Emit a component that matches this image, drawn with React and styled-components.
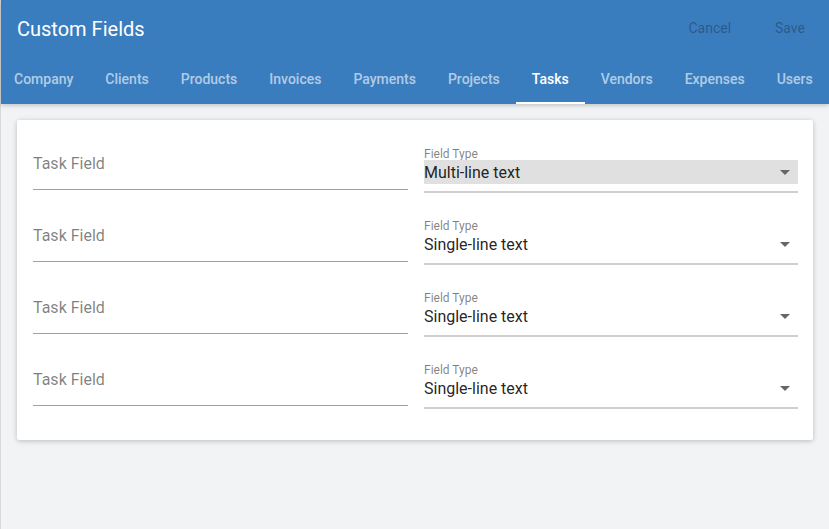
import React from "react";
import styled, { createGlobalStyle } from "styled-components";

const Global = createGlobalStyle`
  html, body { margin: 0; padding: 0; height: 100%; }
  body { background: #f2f3f5; font-family: Roboto, "Noto Sans", sans-serif; }
  #root { min-height: 100%; }
`;

const Page = styled.div`
  min-height: 529px;
  box-sizing: border-box;
  border-left: 1px solid #d9d9db;
  background: #f2f3f5;
`;

const Header = styled.header`
  background: #3a7dbf;
  box-shadow: 0 1px 6px rgba(0, 0, 0, 0.12), 0 1px 4px rgba(0, 0, 0, 0.12);
  position: relative;
  z-index: 1;
`;

const TitleBar = styled.div`
  height: 56px;
  display: flex;
  align-items: center;
  padding: 2px 16px 0;
  box-sizing: border-box;
`;

const Title = styled.h1`
  margin: 0;
  flex: 1;
  color: #fff;
  font-size: 20px;
  font-weight: 400;
`;

const ActionButton = styled.button`
  background: none;
  border: none;
  font-family: Roboto, sans-serif;
  font-size: 14px;
  color: rgba(0, 0, 0, 0.3);
  padding: 0;
  margin: -2px 0 0 ${(p) => p.$gap || 0}px;
  cursor: default;
`;

const Tabs = styled.nav`
  height: 48px;
  display: flex;
  margin-left: -3px;
  white-space: nowrap;
  overflow: hidden;
`;

const Tab = styled.div`
  position: relative;
  display: flex;
  align-items: center;
  padding: 0 16px 2px;
  font-size: 14px;
  font-weight: 500;
  color: ${(p) => (p.$active ? "#fff" : "rgba(255,255,255,0.62)")};
  &::after {
    content: "";
    display: ${(p) => (p.$active ? "block" : "none")};
    position: absolute;
    left: 0;
    right: 0;
    bottom: 0;
    height: 2px;
    background: #fff;
  }
`;

const Content = styled.main`
  padding: 16px;
`;

const Card = styled.section`
  background: #fff;
  border-radius: 2px;
  box-shadow: 0 1px 6px rgba(0, 0, 0, 0.12), 0 1px 4px rgba(0, 0, 0, 0.12);
  padding: 8px 15px 24px 16px;
`;

const Row = styled.div`
  display: grid;
  grid-template-columns: 375px 1fr;
  column-gap: 16px;
  height: 72px;
`;

const TextField = styled.div`
  position: relative;
  height: 72px;
`;

const Placeholder = styled.div`
  position: absolute;
  top: 26px;
  left: 0;
  font-size: 16px;
  line-height: 20px;
  color: rgba(0, 0, 0, 0.5);
`;

const Underline = styled.div`
  position: absolute;
  left: 0;
  right: 0;
  top: ${(p) => p.$top}px;
  height: ${(p) => p.$h}px;
  background: ${(p) => p.$color};
`;

const SelectLabel = styled.div`
  position: absolute;
  top: 19px;
  left: 0;
  font-size: 12px;
  line-height: 14px;
  color: rgba(0, 0, 0, 0.5);
`;

const SelectValue = styled.div`
  position: absolute;
  top: 32px;
  left: 0;
  right: 0;
  height: 24px;
  display: flex;
  align-items: center;
  justify-content: space-between;
  background: ${(p) => (p.$focused ? "#e0e0e0" : "transparent")};
  font-size: 16px;
  color: rgba(0, 0, 0, 0.87);
`;

const Arrow = styled.span`
  width: 0;
  height: 0;
  border-left: 5px solid transparent;
  border-right: 5px solid transparent;
  border-top: 5px solid #666;
  margin-right: 8px;
  margin-top: 1px;
`;

const Spacer = styled.span`
  width: 8px;
`;

const tabs = ["Company", "Clients", "Products", "Invoices", "Payments", "Projects", "Tasks", "Vendors", "Expenses", "Users"];

const rows = [
  { value: "Multi-line text", focused: true },
  { value: "Single-line text" },
  { value: "Single-line text" },
  { value: "Single-line text" },
];

export default function App() {
  return (
    <Page>
      <Global />
      <Header>
        <TitleBar>
          <Title>Custom Fields</Title>
          <ActionButton>Cancel</ActionButton>
          <ActionButton $gap={44}>Save</ActionButton>
          <Spacer />
        </TitleBar>
        <Tabs>
          {tabs.map((t) => (
            <Tab key={t} $active={t === "Tasks"}>{t}</Tab>
          ))}
        </Tabs>
      </Header>
      <Content>
        <Card>
          {rows.map((r, i) => (
            <Row key={i}>
              <TextField>
                <Placeholder>Task Field</Placeholder>
                <Underline $top={61} $h={1} $color="#a0a0a0" />
              </TextField>
              <TextField>
                <SelectLabel>Field Type</SelectLabel>
                <SelectValue $focused={r.focused}>
                  {r.value}
                  <Arrow />
                </SelectValue>
                <Underline $top={63} $h={2} $color="#d0d0d0" />
              </TextField>
            </Row>
          ))}
        </Card>
      </Content>
    </Page>
  );
}
